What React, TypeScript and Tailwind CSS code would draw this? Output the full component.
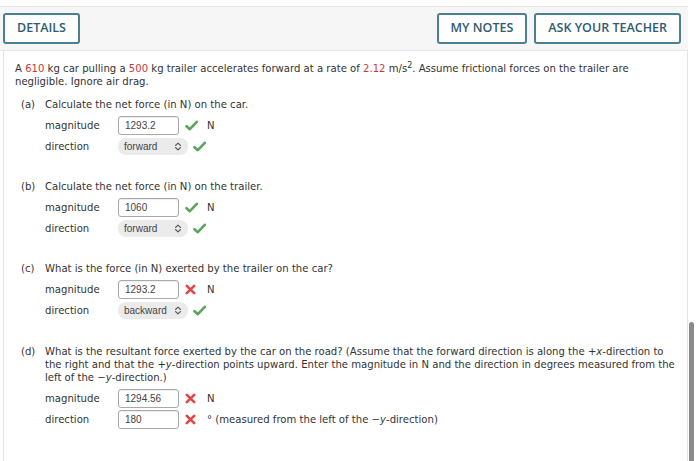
import React from "react";

const Check = () => (
  <svg width="13" height="11" viewBox="0 0 13 11" className="shrink-0">
    <path d="M1.5 6.2 L4.8 9.2 L11.8 1.8" fill="none" stroke="#5aa55a" strokeWidth="2.6" strokeLinecap="round" strokeLinejoin="round" />
  </svg>
);

const Cross = () => (
  <svg width="11" height="11" viewBox="0 0 11 11" className="shrink-0">
    <path d="M1.8 1.8 L9.2 9.2 M9.2 1.8 L1.8 9.2" fill="none" stroke="#e04848" strokeWidth="2.6" strokeLinecap="round" />
  </svg>
);

const Updown = () => (
  <svg width="8" height="9" viewBox="0 0 8 9" className="shrink-0">
    <path d="M1.5 3.5 L4 1.2 L6.5 3.5 M1.5 5.5 L4 7.8 L6.5 5.5" fill="none" stroke="#555" strokeWidth="1.1" strokeLinecap="round" strokeLinejoin="round" />
  </svg>
);

const Input = ({ v }: { v: string }) => (
  <div className="w-[61px] h-[19px] border border-[#a9a9a9] rounded-[3px] bg-white flex items-center pl-[6px] text-[10px] text-[#444] shadow-[inset_0_1px_1px_rgba(0,0,0,0.08)]" style={{ fontFamily: "'Liberation Sans', Arial, sans-serif" }}>
    {v}
  </div>
);

const Select = ({ v }: { v: string }) => (
  <div className="w-[70px] h-[17px] rounded-[8px] bg-[#ebebeb] flex items-center justify-between pl-[6px] pr-[6px] text-[10px] text-[#444]" style={{ fontFamily: "'Liberation Sans', Arial, sans-serif" }}>
    <span>{v}</span>
    <Updown />
  </div>
);

const Row = ({ label, children }: { label: string; children: React.ReactNode }) => (
  <div className="flex items-center h-[21px]">
    <div className="w-[73px] shrink-0">{label}</div>
    <div className="flex items-center">{children}</div>
  </div>
);

const Btn = ({ t }: { t: string }) => (
  <div className="h-[31px] px-[12px] flex items-center border-2 border-[#4d7f92] rounded-[3px] bg-white text-[#2f5b6f] text-[12.5px] font-semibold" style={{ fontFamily: "'Open Sans', sans-serif" }}>
    {t}
  </div>
);

const Part = ({ tag, title, children }: { tag: string; title: React.ReactNode; children: React.ReactNode }) => (
  <div className="flex">
    <div className="w-[30px] pl-[6px] shrink-0">{tag}</div>
    <div className="flex-1">
      <div>{title}</div>
      <div className="mt-[4px]">{children}</div>
    </div>
  </div>
);

export default function App() {
  return (
    <div className="w-[700px] h-[461px] overflow-hidden bg-white relative text-[#333]" style={{ fontFamily: "'DejaVu Sans', Verdana, sans-serif" }}>
      <div className="pt-[6px] w-[688px]">
        <div className="h-[45px] bg-[#f6f6f6] border-t border-b border-[#e6e6e6] flex items-center justify-between pl-[3px] pr-[7px]">
          <Btn t="DETAILS" />
          <div className="flex gap-[7px]">
            <Btn t="MY NOTES" />
            <Btn t="ASK YOUR TEACHER" />
          </div>
        </div>
        <div className="ml-[3px] border-l border-r border-[#e4e4e4] h-[420px] pl-[11px] pr-[10px] pt-[11px] text-[10.1px] leading-[13px]">
          <p>
            A <span className="text-[#c63a3a]">610</span> kg car pulling a <span className="text-[#c63a3a]">500</span> kg trailer accelerates forward at a rate of <span className="text-[#c63a3a]">2.12</span> m/s<sup className="text-[8px] leading-[0]">2</sup>. Assume frictional forces on the trailer are negligible. Ignore air drag.
          </p>

          <div className="mt-[10px]">
            <Part tag="(a)" title="Calculate the net force (in N) on the car.">
              <Row label="magnitude"><Input v="1293.2" /><span className="ml-[6px]"><Check /></span><span className="ml-[9px]">N</span></Row>
              <Row label="direction"><Select v="forward" /><span className="ml-[5px]"><Check /></span></Row>
            </Part>
          </div>

          <div className="mt-[23px]">
            <Part tag="(b)" title="Calculate the net force (in N) on the trailer.">
              <Row label="magnitude"><Input v="1060" /><span className="ml-[6px]"><Check /></span><span className="ml-[9px]">N</span></Row>
              <Row label="direction"><Select v="forward" /><span className="ml-[5px]"><Check /></span></Row>
            </Part>
          </div>

          <div className="mt-[23px]">
            <Part tag="(c)" title="What is the force (in N) exerted by the trailer on the car?">
              <Row label="magnitude"><Input v="1293.2" /><span className="ml-[6px]"><Cross /></span><span className="ml-[11px]">N</span></Row>
              <Row label="direction"><Select v="backward" /><span className="ml-[5px]"><Check /></span></Row>
            </Part>
          </div>

          <div className="mt-[24px]">
            <Part
              tag="(d)"
              title={
                <>
                  What is the resultant force exerted by the car on the road? (Assume that the forward direction is along the +<i>x</i>-direction to the right and that the +<i>y</i>-direction points upward. Enter the magnitude in N and the direction in degrees measured from the left of the −<i>y</i>-direction.)
                </>
              }
            >
              <Row label="magnitude"><Input v="1294.56" /><span className="ml-[6px]"><Cross /></span><span className="ml-[11px]">N</span></Row>
              <Row label="direction"><Input v="180" /><span className="ml-[6px]"><Cross /></span><span className="ml-[11px]">° (measured from the left of the −<i>y</i>-direction)</span></Row>
            </Part>
          </div>
        </div>
      </div>
      <div className="absolute left-[689px] top-[322px] w-[5px] h-[150px] rounded-[3px] bg-[#8a8a8a]" />
    </div>
  );
}
